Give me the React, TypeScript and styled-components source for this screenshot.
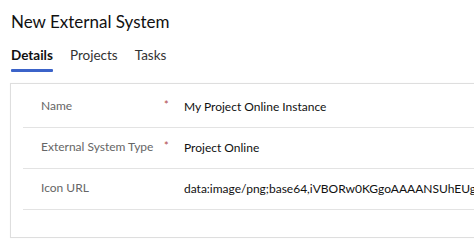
import React from 'react';
import styled, { createGlobalStyle } from 'styled-components';

const GlobalStyle = createGlobalStyle`
  html, body {
    margin: 0;
    padding: 0;
    background: #ffffff;
    font-family: Lato, "Open Sans", Arial, sans-serif;
    overflow: hidden;
  }
`;

const Page = styled.div`
  width: 474px;
  height: 249px;
  overflow: hidden;
  padding: 10px 0 0 10px;
  box-sizing: border-box;
`;

const Title = styled.h1`
  margin: 0 0 0 1px;
  font-size: 17px;
  font-weight: 400;
  line-height: 24px;
  color: #111;
`;

const Tabs = styled.div`
  display: flex;
  gap: 17px;
  margin: 9px 0 0 1px;
  height: 40px;
`;

const Tab = styled.div<{ $active?: boolean }>`
  position: relative;
  font-size: 13.5px;
  line-height: 24px;
  color: ${({ $active }) => ($active ? '#111' : '#333')};
  font-weight: ${({ $active }) => ($active ? 700 : 400)};
  &::after {
    content: '';
    display: ${({ $active }) => ($active ? 'block' : 'none')};
    position: absolute;
    left: 0;
    right: 0;
    top: 26px;
    height: 3px;
    border-radius: 1px;
    background: #3b63c9;
  }
`;

const Card = styled.div`
  width: 520px;
  border: 1px solid #dedede;
  padding: 3px 0 27px 12px;
  box-shadow: 0 0 1px rgba(0, 0, 0, 0.05);
`;

const Row = styled.div`
  display: grid;
  grid-template-columns: 123px 20px 1fr;
  height: 41px;
  border-bottom: 1px solid #e3e3e3;
  padding-left: 18px;
  box-sizing: border-box;
  align-items: start;
  padding-top: 10px;
`;

const Label = styled.div`
  font-size: 12px;
  color: #666;
  line-height: 18px;
`;

const Required = styled.div`
  color: #b0474a;
  font-size: 11px;
  line-height: 14px;
  padding-top: 1px;
`;

const Value = styled.div`
  font-size: 12px;
  color: #111;
  line-height: 20px;
  white-space: nowrap;
`;

const fields = [
  { label: 'Name', required: true, value: 'My Project Online Instance' },
  { label: 'External System Type', required: true, value: 'Project Online' },
  {
    label: 'Icon URL',
    required: false,
    value: 'data:image/png;base64,iVBORw0KGgoAAAANSUhEUgAAAAEAAAAB',
  },
];

export default function App() {
  return (
    <Page>
      <GlobalStyle />
      <Title>New External System</Title>
      <Tabs>
        <Tab $active>Details</Tab>
        <Tab>Projects</Tab>
        <Tab>Tasks</Tab>
      </Tabs>
      <Card>
        {fields.map((f) => (
          <Row key={f.label}>
            <Label>{f.label}</Label>
            <Required>{f.required ? '*' : ''}</Required>
            <Value>{f.value}</Value>
          </Row>
        ))}
      </Card>
    </Page>
  );
}
